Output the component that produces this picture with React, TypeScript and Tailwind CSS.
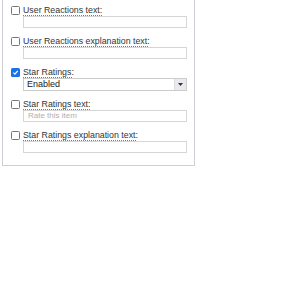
const font = { fontFamily: '"Liberation Sans", Arial, sans-serif' };

type Field = {
  label: string;
  checked?: boolean;
  kind: "input" | "select";
  placeholder?: string;
  value?: string;
};

const fields: Field[] = [
  { label: "User Reactions text:", kind: "input" },
  { label: "User Reactions explanation text:", kind: "input" },
  { label: "Star Ratings:", checked: true, kind: "select", value: "Enabled" },
  { label: "Star Ratings text:", kind: "input", placeholder: "Rate this item" },
  { label: "Star Ratings explanation text:", kind: "input" },
];

const Checkbox = ({ checked }: { checked?: boolean }) =>
  checked ? (
    <span className="flex h-[9px] w-[9px] shrink-0 items-center justify-center rounded-[1.5px] bg-[#1a73e8]">
      <svg width="7" height="7" viewBox="0 0 10 10">
        <path d="M2 5.2 L4.2 7.3 L8.2 2.6" fill="none" stroke="#fff" strokeWidth="1.8" />
      </svg>
    </span>
  ) : (
    <span className="h-[9px] w-[9px] shrink-0 rounded-[1.5px] border border-[#767676] bg-white" />
  );

const App = () => {
  return (
    <div className="h-[281px] w-[281px] bg-white" style={font}>
      <div className="ml-[2px] w-[193px] border border-t-0 border-[#cfcfdc] pb-[12px] pl-[8px] pr-[7px] pt-[5px]">
        <div className="flex flex-col gap-[8px]">
          {fields.map((f, i) => (
            <div key={i} className="flex flex-col">
              <div className="flex h-[11px] items-center gap-[3px]">
                <Checkbox checked={f.checked} />
                <span className="text-[8.8px] leading-none text-[#333] underline decoration-dotted decoration-[#7070d0] underline-offset-[1.5px]">
                  {f.label}
                </span>
              </div>
              {f.kind === "input" ? (
                <div className="ml-[12px] flex h-[12px] items-center border border-[#d6d6d6] bg-white px-[4px] text-[8px] text-[#b0b0b0]">
                  {f.placeholder}
                </div>
              ) : (
                <div className="ml-[12px] flex h-[13px] items-center border border-[#cccccc] bg-white">
                  <span className="flex-1 pl-[3px] text-[9px] text-[#222]">{f.value}</span>
                  <span className="flex h-full w-[12px] items-center justify-center border-l border-[#dddddd] bg-[#e9e9ee]">
                    <svg width="5" height="3" viewBox="0 0 5 3">
                      <path d="M0 0 H5 L2.5 3 Z" fill="#333" />
                    </svg>
                  </span>
                </div>
              )}
            </div>
          ))}
        </div>
      </div>
    </div>
  );
};

export default App;
